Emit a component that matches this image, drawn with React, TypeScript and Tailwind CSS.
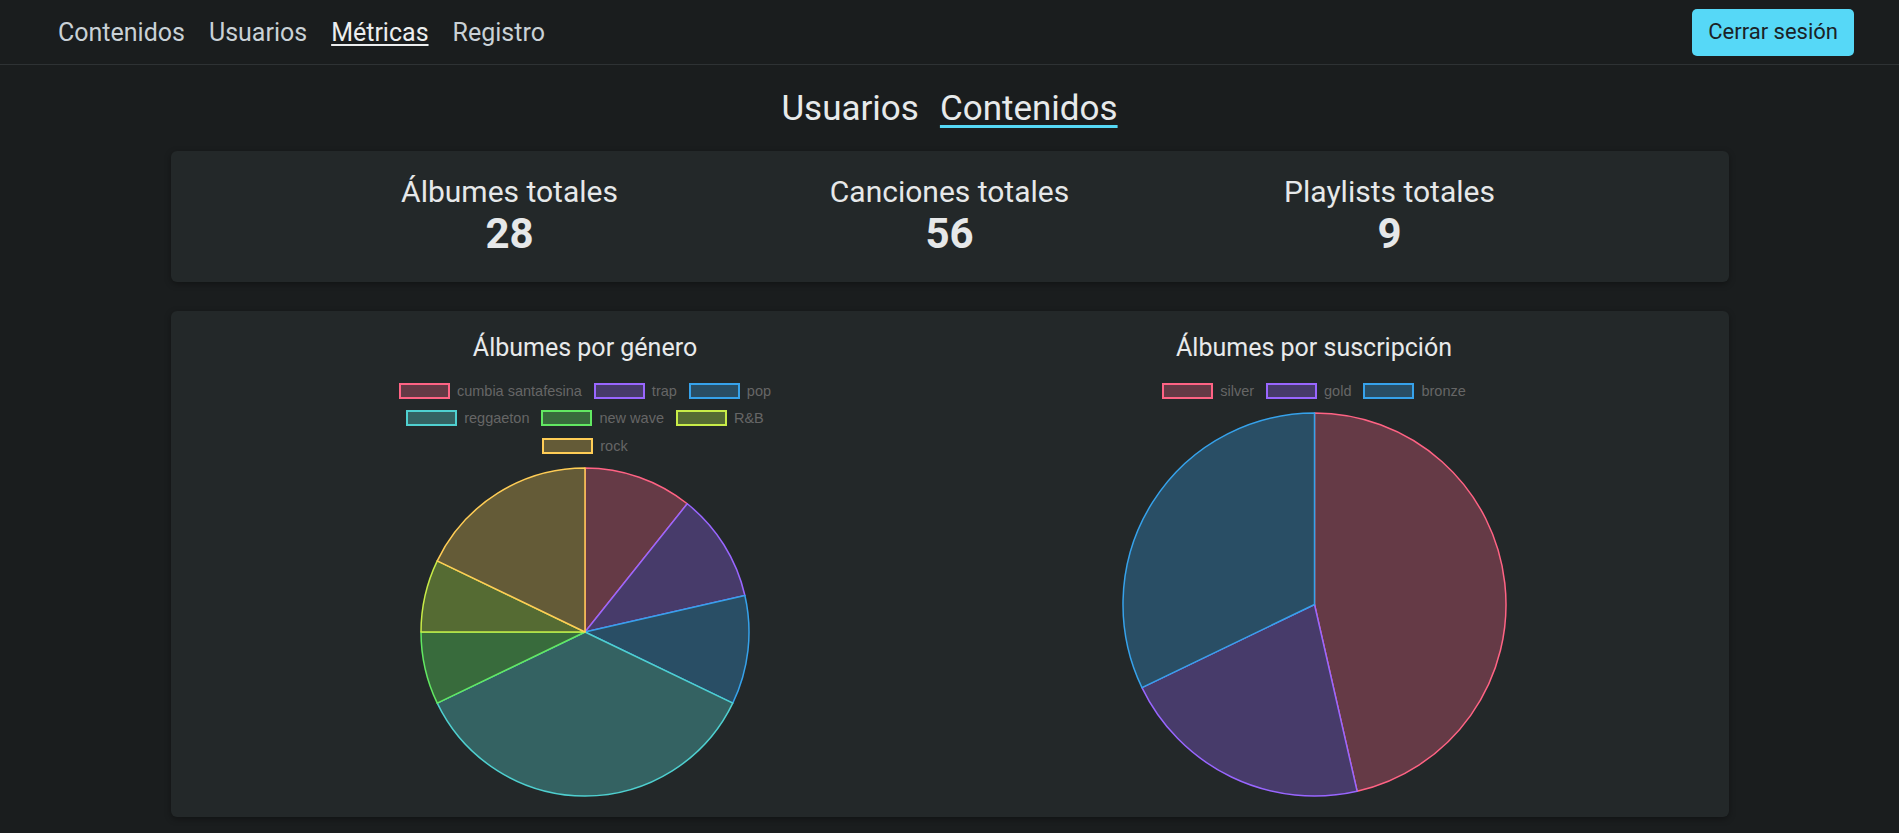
import React from 'react';

// ─── Data ─────────────────────────────────────────────────────────────────────

interface Slice {
  label: string;
  value: number;
  stroke: string;
  fill: string;
}

const byGenre: Slice[] = [
  { label: 'cumbia santafesina', value: 3, stroke: '#ff6384', fill: '#653a46' },
  { label: 'trap', value: 3, stroke: '#9966ff', fill: '#473b6a' },
  { label: 'pop', value: 3, stroke: '#36a2eb', fill: '#294e65' },
  { label: 'reggaeton', value: 10, stroke: '#4fd0d0', fill: '#346262' },
  { label: 'new wave', value: 2, stroke: '#62e862', fill: '#386b3c' },
  { label: 'R&B', value: 2, stroke: '#c8ec48', fill: '#556b33' },
  { label: 'rock', value: 5, stroke: '#ffcd56', fill: '#645b37' },
];

const bySubscription: Slice[] = [
  { label: 'silver', value: 13, stroke: '#ff6384', fill: '#653a46' },
  { label: 'gold', value: 6, stroke: '#9966ff', fill: '#473b6a' },
  { label: 'bronze', value: 9, stroke: '#36a2eb', fill: '#294e65' },
];

const navLinks = ['Contenidos', 'Usuarios', 'Métricas', 'Registro'];

const stats = [
  { label: 'Álbumes totales', value: 28 },
  { label: 'Canciones totales', value: 56 },
  { label: 'Playlists totales', value: 9 },
];

// ─── Page ─────────────────────────────────────────────────────────────────────

export default function App() {
  return (
    <div className="min-h-screen bg-[#1a1d1e] font-['Roboto',sans-serif] pb-4">
      {/* Top nav */}
      <nav className="h-[65px] flex items-center justify-between pl-[58px] pr-[45px] border-b border-[#2e3234]">
        <div className="flex items-center gap-[24px] pt-[2px]">
          {navLinks.map((l) => (
            <a
              key={l}
              className={
                l === 'Métricas'
                  ? 'text-[25px] leading-[28px] text-[#eceeef] underline decoration-2 underline-offset-[3px]'
                  : 'text-[25px] leading-[28px] text-[#c9d1d6]'
              }
            >
              {l}
            </a>
          ))}
        </div>
        <button className="h-[47px] px-[16px] rounded-[5px] bg-[#56d8f7] text-[#1b2226] text-[22px] leading-none">
          Cerrar sesión
        </button>
      </nav>

      {/* Sub tabs */}
      <div className="mt-[24px] flex justify-center gap-[21px] text-[35px] leading-[40px] text-[#e7eaeb]">
        <a>Usuarios</a>
        <a className="underline decoration-[3px] decoration-[#55d8f5] underline-offset-[5px]">Contenidos</a>
      </div>

      {/* Stats */}
      <div className="mt-[22px] mx-auto w-[1558px] rounded-[6px] bg-[#232829] shadow-[0_2px_6px_rgba(0,0,0,0.35)] py-[23px]">
        <div className="mx-auto w-[1320px] grid grid-cols-3">
          {stats.map((s) => (
            <div key={s.label} className="text-center text-[#e6e8e9]">
              <p className="text-[30px] leading-[35px]">{s.label}</p>
              <p className="text-[42px] leading-[50px] font-bold">{s.value}</p>
            </div>
          ))}
        </div>
      </div>

      {/* Charts */}
      <div className="mt-[29px] mx-auto w-[1558px] rounded-[6px] bg-[#232829] shadow-[0_2px_6px_rgba(0,0,0,0.35)] px-[50px] pt-[22px] pb-[20px] grid grid-cols-2">
        <ChartBlock
          title="Álbumes por género"
          data={byGenre}
          rows={[[0, 1, 2], [3, 4, 5], [6]]}
          size={330}
        />
        <ChartBlock
          title="Álbumes por suscripción"
          data={bySubscription}
          rows={[[0, 1, 2]]}
          size={385}
        />
      </div>
    </div>
  );
}

// ─── Chart block ──────────────────────────────────────────────────────────────

function ChartBlock({
  title,
  data,
  rows,
  size,
}: {
  title: string;
  data: Slice[];
  rows: number[][];
  size: number;
}) {
  return (
    <div className="flex flex-col items-center">
      <h3 className="text-[25px] leading-[30px] text-[#e8eaeb]">{title}</h3>

      {/* Legend */}
      <div className="mt-[14px] flex flex-col items-center font-['Liberation_Sans',Arial,sans-serif]">
        {rows.map((row, i) => (
          <div key={i} className="h-[27.5px] flex items-center gap-x-[12px]">
            {row.map((idx) => (
              <div key={idx} className="flex items-center gap-[7px]">
                <span
                  className="block w-[51px] h-[16px] border-2"
                  style={{ background: data[idx].fill, borderColor: data[idx].stroke }}
                />
                <span className="text-[14.5px] leading-none text-[#666666]">{data[idx].label}</span>
              </div>
            ))}
          </div>
        ))}
      </div>

      <div className="mt-[7px]">
        <Pie data={data} size={size} />
      </div>
    </div>
  );
}

// ─── Pie ──────────────────────────────────────────────────────────────────────

function Pie({ data, size }: { data: Slice[]; size: number }) {
  const total = data.reduce((a, d) => a + d.value, 0);
  const r = size / 2 - 1;
  const c = size / 2;
  let acc = 0;

  const point = (frac: number) => {
    const a = frac * Math.PI * 2 - Math.PI / 2;
    return [c + r * Math.cos(a), c + r * Math.sin(a)];
  };

  return (
    <svg width={size} height={size} viewBox={`0 0 ${size} ${size}`} className="block">
      {data.map((d) => {
        const start = acc / total;
        acc += d.value;
        const end = acc / total;
        const [x1, y1] = point(start);
        const [x2, y2] = point(end);
        const large = end - start > 0.5 ? 1 : 0;
        const path = `M ${c} ${c} L ${x1} ${y1} A ${r} ${r} 0 ${large} 1 ${x2} ${y2} Z`;
        return (
          <path
            key={d.label}
            d={path}
            fill={d.fill}
            stroke={d.stroke}
            strokeWidth={1.5}
            strokeLinejoin="round"
          />
        );
      })}
    </svg>
  );
}
